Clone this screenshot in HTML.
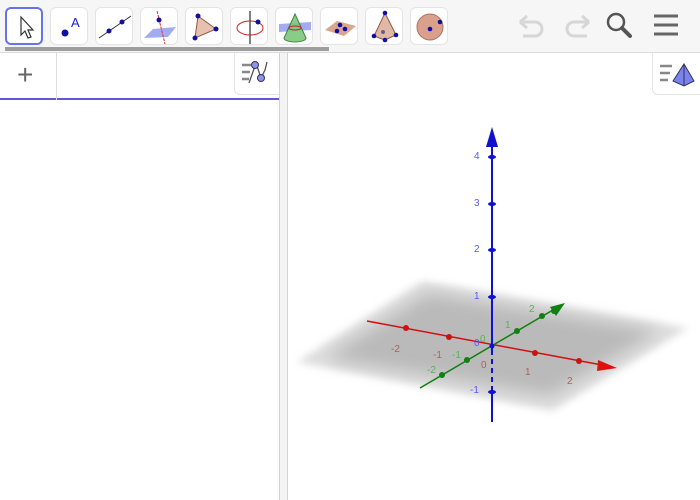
<!DOCTYPE html>
<html><head><style>
*{margin:0;padding:0;box-sizing:border-box}
body{width:700px;height:500px;overflow:hidden;background:#fff;font-family:"Liberation Sans",sans-serif;position:relative}
.tb{position:absolute;left:0;top:0;width:700px;height:53px;background:#f6f6f6;border-bottom:1px solid #dcdcdc}
.btn{position:absolute;top:7px;width:38px;height:38px;background:#fff;border:1px solid #e4e4e4;border-radius:6px}
.btn svg{position:absolute;left:0;top:0}
.sel{border:2px solid #6673ea}
.scroll{position:absolute;left:5px;top:47px;width:324px;height:4px;background:#9e9e9e}
.div{position:absolute;left:279px;top:53px;width:9px;height:447px;background:#f4f4f4;border-left:1px solid #d4d4d4;border-right:1px solid #d4d4d4}
</style></head><body>
<div class="tb"></div>
<div class="btn sel" style="left:5px"><svg width="36" height="36"><path d="M14 8 L14 26 L18 22 L21 29 L24 28 L21 21 L26 21 Z" fill="#fff" stroke="#333" stroke-width="1.2"/></svg></div>
<div class="btn" style="left:50px"><svg width="38" height="38"><circle cx="14" cy="25" r="3.5" fill="#1010a0"/><text x="20" y="19" font-size="13" fill="#1a1ae0" font-family="Liberation Sans">A</text></svg></div>
<div class="btn" style="left:95px"><svg width="38" height="38"><line x1="3" y1="30" x2="35" y2="8" stroke="#333"/><circle cx="13" cy="23" r="2.5" fill="#1010a0"/><circle cx="26" cy="14" r="2.5" fill="#1010a0"/></svg></div>
<div class="btn" style="left:140px"><svg width="38" height="38"><path d="M3 30 L12 21 L35 19 L27 29 Z" fill="#8c96f0" opacity=".8"/><line x1="16" y1="3" x2="24" y2="36" stroke="#e03030" stroke-dasharray="3 1"/><circle cx="18" cy="12" r="2.5" fill="#1010a0"/></svg></div>
<div class="btn" style="left:185px"><svg width="38" height="38"><path d="M12 8 L30 21 L9 30 Z" fill="#e8c0b0" stroke="#8a5a4a"/><circle cx="12" cy="8" r="2.5" fill="#1010a0"/><circle cx="30" cy="21" r="2.5" fill="#1010a0"/><circle cx="9" cy="30" r="2.5" fill="#1010a0"/></svg></div>
<div class="btn" style="left:230px"><svg width="38" height="38"><ellipse cx="19" cy="20" rx="13" ry="7" fill="none" stroke="#d02020"/><line x1="19" y1="3" x2="19" y2="36" stroke="#555" stroke-width="1.5"/><circle cx="27" cy="14" r="2.5" fill="#1010a0"/></svg></div>
<div class="btn" style="left:275px"><svg width="38" height="38"><path d="M3 16 L35 14 L35 22 L3 24Z" fill="#8c96f0" opacity=".8"/><path d="M19 6 L8 30 A11 4 0 0 0 30 30 Z" fill="#7cc77c" stroke="#2c7a2c" opacity=".9"/><ellipse cx="19" cy="20" rx="6" ry="2" fill="none" stroke="#d02020"/></svg></div>
<div class="btn" style="left:320px"><svg width="38" height="38"><path d="M4 22 L16 13 L35 18 L23 28 Z" fill="#d9a690"/><circle cx="19" cy="17" r="2.3" fill="#1010a0"/><circle cx="16" cy="23" r="2.3" fill="#1010a0"/><circle cx="24" cy="21" r="2.3" fill="#1010a0"/></svg></div>
<div class="btn" style="left:365px"><svg width="38" height="38"><path d="M19 5 L8 28 L19 32 L30 27 Z" fill="#e0b8a4" stroke="#8a5a4a"/><circle cx="19" cy="5" r="2.3" fill="#1010a0"/><circle cx="8" cy="28" r="2.3" fill="#1010a0"/><circle cx="19" cy="32" r="2.3" fill="#1010a0"/><circle cx="30" cy="27" r="2.3" fill="#1010a0"/><circle cx="17" cy="24" r="2" fill="#606090"/></svg></div>
<div class="btn" style="left:410px"><svg width="38" height="38"><circle cx="19" cy="19" r="13" fill="#d9a08c" stroke="#b07060"/><circle cx="19" cy="21" r="2.3" fill="#1010a0"/><circle cx="29" cy="14" r="2.3" fill="#1010a0"/></svg></div>
<div class="scroll"></div>
<svg style="position:absolute;left:515px;top:10px" width="185" height="34">
<path d="M8 12 H20 A7 7 0 0 1 20 26 H8" fill="none" stroke="#d6d6d6" stroke-width="3"/><path d="M5 12 L12 6 M5 12 L12 18" stroke="#d6d6d6" stroke-width="3"/>
<path d="M80 12 H67 A7 7 0 0 0 67 26 H80" fill="none" stroke="#d6d6d6" stroke-width="3" transform="translate(-8 0)"/><path d="M74 12 L67 6 M74 12 L67 18" stroke="#d6d6d6" stroke-width="3"/>
<circle cx="101" cy="12" r="8" fill="none" stroke="#555" stroke-width="2.5"/><line x1="107" y1="18" x2="115" y2="26" stroke="#555" stroke-width="4" stroke-linecap="round"/>
<path d="M139 6 H163 M139 15 H163 M139 24 H163" stroke="#666" stroke-width="3"/>
</svg>
<div style="position:absolute;left:0;top:53px;width:279px;height:47px;border-bottom:2px solid #6557d2"></div>
<div style="position:absolute;left:56px;top:53px;width:1px;height:47px;background:#ddd"></div>
<div style="position:absolute;left:17px;top:59px;font-size:28px;color:#666;font-weight:300">+</div>
<div style="position:absolute;left:234px;top:53px;width:46px;height:42px;background:#fff;border:1px solid #e4e4e4;border-top:none;border-right:none;border-radius:0 0 0 6px"></div>
<svg style="position:absolute;left:240px;top:58px" width="40" height="32"><path d="M2 7 H11 M2 14 H10 M2 21 H9" stroke="#888" stroke-width="2.5"/><path d="M9 25 L16 5 L21 20 L25 12 L27 4" fill="none" stroke="#555" stroke-width="1.3"/><circle cx="15" cy="7" r="3.5" fill="#8c96f0" stroke="#335"/><circle cx="21" cy="20" r="3.5" fill="#8c96f0" stroke="#335"/></svg>
<div class="div"></div>
<div style="position:absolute;left:652px;top:53px;width:48px;height:42px;background:#fff;border:1px solid #e4e4e4;border-top:none;border-right:none;border-radius:0 0 0 6px"></div>
<svg style="position:absolute;left:658px;top:58px" width="42" height="32"><path d="M2 8 H14 M2 15 H12 M2 22 H10" stroke="#888" stroke-width="2.5"/><path d="M15 23 L26 6 L36 23 L26 28Z" fill="#7a82f0" stroke="#335"/><path d="M26 6 L26 28" stroke="#335"/></svg>
<svg style="position:absolute;left:0;top:0" width="700" height="500">
<defs><filter id="b"><feGaussianBlur stdDeviation="4"/></filter><filter id="c"><feGaussianBlur stdDeviation="8"/></filter></defs>
<path d="M297 362 L423 281 L688 328 L552 411 Z" fill="#dedede" filter="url(#b)"/>
<path d="M325 358 L428 293 L660 331 L550 396 Z" fill="#bababa" filter="url(#c)"/>
<line x1="492" y1="350" x2="492" y2="386" stroke="#1010d0" stroke-width="2" stroke-dasharray="5 4"/>
<line x1="492" y1="386" x2="492" y2="422" stroke="#1010d0" stroke-width="2"/>
<line x1="367" y1="321" x2="602" y2="365" stroke="#d01010" stroke-width="1.5"/>
<path d="M617 368 L598 360 L597 371 Z" fill="#e01010"/>
<line x1="420" y1="388" x2="558" y2="307" stroke="#108010" stroke-width="1.5"/>
<path d="M565 303 L550 307 L556 316 Z" fill="#108010"/>
<g fill="#d01010"><circle cx="406" cy="328" r="3"/><circle cx="449" cy="337" r="3"/><circle cx="535" cy="353" r="3"/><circle cx="579" cy="361" r="3"/></g>
<g fill="#108010"><circle cx="442" cy="375" r="3"/><circle cx="467" cy="360" r="3"/><circle cx="517" cy="331" r="3"/><circle cx="542" cy="316" r="3"/><circle cx="554" cy="311" r="3"/></g>
<line x1="492" y1="135" x2="492" y2="350" stroke="#1010d0" stroke-width="2"/>
<path d="M492 127 L486 147 L498 147 Z" fill="#1010d0"/>
<g fill="#1010d0"><ellipse cx="492" cy="157" rx="4" ry="2"/><ellipse cx="492" cy="204" rx="4" ry="2"/><ellipse cx="492" cy="250" rx="4" ry="2"/><ellipse cx="492" cy="297" rx="4" ry="2"/><ellipse cx="492" cy="392" rx="4" ry="2"/><circle cx="492" cy="346" r="2.5"/></g>
<g font-family="Liberation Sans" font-size="10" fill="#5a5af0"><text x="474" y="159">4</text><text x="474" y="206">3</text><text x="474" y="252">2</text><text x="474" y="299">1</text><text x="470" y="393">-1</text><text x="474" y="346">0</text></g>
<g font-family="Liberation Sans" font-size="10" fill="#b06060"><text x="391" y="352">-2</text><text x="433" y="358">-1</text><text x="481" y="368">0</text><text x="525" y="375">1</text><text x="567" y="384">2</text></g>
<g font-family="Liberation Sans" font-size="10" fill="#5ab05a"><text x="427" y="373">-2</text><text x="452" y="358">-1</text><text x="505" y="328">1</text><text x="529" y="312">2</text><text x="480" y="342">0</text></g>
</svg>
</body></html>
